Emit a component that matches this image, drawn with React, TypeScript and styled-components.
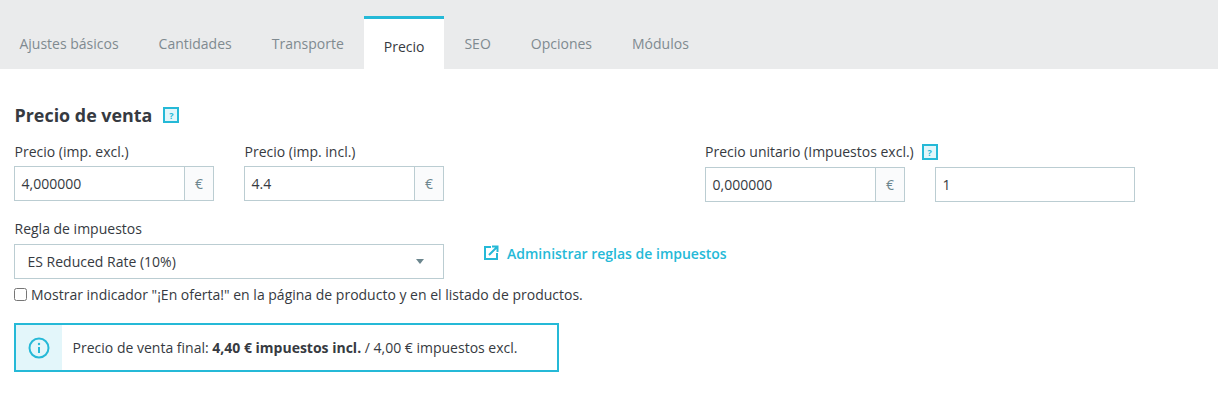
import React from "react";
import styled, { createGlobalStyle } from "styled-components";

const Global = createGlobalStyle`
  html, body { margin: 0; padding: 0; background: #fff; }
  body { font-family: "Open Sans", "Liberation Sans", sans-serif; font-size: 14px; color: #363a41; }
  * { box-sizing: border-box; }
`;

const Page = styled.div`
  width: 1218px;
  height: 407px;
  overflow: hidden;
`;

const TabBar = styled.nav`
  height: 69px;
  background: #eaebec;
  display: flex;
  align-items: flex-end;
`;

const Tab = styled.div<{ $active?: boolean }>`
  height: 53px;
  padding: ${(p) => (p.$active ? "18px 20px 0" : "15px 20px 0")};
  line-height: 20px;
  font-size: 14px;
  white-space: nowrap;
  color: ${(p) => (p.$active ? "#363a41" : "#7f8a90")};
  background: ${(p) => (p.$active ? "#fff" : "transparent")};
  border-top: 3px solid ${(p) => (p.$active ? "#25b9d7" : "transparent")};
  &:first-child { margin-left: -0.6px; }
`;

const Content = styled.main`
  padding: 36px 0 0 14px;
`;

const HeadingRow = styled.div`
  display: flex;
  align-items: center;
  gap: 11px;
  height: 20px;
  padding-left: 0.5px;
`;

const Heading = styled.h2`
  margin: 0;
  font-size: 17.9px;
  line-height: 20px;
  font-weight: 700;
  color: #363a41;
`;

const Help = styled.span`
  display: inline-flex;
  flex: none;
  width: 16px;
  height: 16px;
  align-items: center;
  justify-content: center;
  border: 2px solid #25b9d7;
  background: #e3f6fa;
  color: #25b9d7;
  font-size: 9px;
  font-weight: 700;
  line-height: 1;
`;

const PriceRow = styled.div`
  display: flex;
  align-items: flex-start;
  margin-top: 17px;
`;

const Field = styled.div<{ $gap?: number; $width?: number }>`
  margin-left: ${(p) => p.$gap ?? 0}px;
  width: ${(p) => (p.$width ? `${p.$width}px` : "auto")};
`;

const Label = styled.div`
  display: flex;
  align-items: center;
  gap: 8px;
  height: 20px;
  padding-left: 0.5px;
  font-size: 14px;
  line-height: 20px;
  color: #363a41;
  margin-bottom: 4px;
  white-space: nowrap;
`;

const OffsetLabel = styled(Label)`
  margin-bottom: 5px;
  padding-left: 0;
`;

const TaxLabel = styled(Label)`
  margin-bottom: 5px;
`;

const InputGroup = styled.div<{ $width: number }>`
  display: flex;
  width: ${(p) => p.$width}px;
  height: 35px;
  border: 1px solid #bbcdd2;
  background: #fff;
`;

const Value = styled.div`
  flex: 1;
  padding-left: 6.6px;
  height: 33px;
  font-size: 14px;
  color: #363a41;
  line-height: 33px;
`;

const Suffix = styled.div`
  width: 29px;
  border-left: 1px solid #bbcdd2;
  background: #fafbfc;
  color: #6c868e;
  text-align: center;
  line-height: 33px;
  font-size: 14px;
`;

const TaxRow = styled.div`
  display: flex;
  margin-top: 17px;
`;

const SelectBox = styled.div`
  display: flex;
  align-items: center;
  justify-content: space-between;
  width: 430px;
  height: 35px;
  padding: 0 19px 1px 12.5px;
  border: 1px solid #bbcdd2;
  font-size: 14px;
  color: #363a41;
`;

const Caret = styled.span`
  width: 0;
  height: 0;
  border-left: 4.5px solid transparent;
  border-right: 4.5px solid transparent;
  border-top: 5px solid #6c868e;
`;

const ManageLink = styled.a`
  display: flex;
  align-items: center;
  gap: 8px;
  margin: 24px 0 0 39px;
  height: 20px;
  font-size: 14px;
  font-weight: 600;
  color: #25b9d7;
  text-decoration: none;
  white-space: nowrap;
`;

const CheckRow = styled.label`
  display: flex;
  align-items: center;
  height: 20px;
  margin-top: 5px;
  font-size: 14px;
  color: #363a41;
  white-space: nowrap;
`;

const Box = styled.input`
  width: 13px;
  height: 13px;
  margin: 0 4px 0 0;
  flex: none;
`;

const Alert = styled.div`
  display: flex;
  width: 545px;
  height: 49px;
  margin-top: 19px;
  border: 2px solid #25b9d7;
  background: #fff;
`;

const AlertIcon = styled.div`
  width: 46px;
  background: #e3f6fa;
  display: flex;
  align-items: center;
  justify-content: center;
  color: #25b9d7;
`;

const AlertText = styled.div`
  padding-left: 10.6px;
  line-height: 45px;
  font-size: 14px;
  color: #363a41;
  white-space: nowrap;
  b { font-weight: 700; }
`;

const tabs = ["Ajustes básicos", "Cantidades", "Transporte", "Precio", "SEO", "Opciones", "Módulos"];

export default function App() {
  return (
    <Page>
      <Global />
      <TabBar>
        {tabs.map((t) => (
          <Tab key={t} $active={t === "Precio"}>{t}</Tab>
        ))}
      </TabBar>
      <Content>
        <HeadingRow>
          <Heading>Precio de venta</Heading>
          <Help>?</Help>
        </HeadingRow>
        <PriceRow>
          <Field>
            <Label>Precio (imp. excl.)</Label>
            <InputGroup $width={200}>
              <Value>4,000000</Value>
              <Suffix>€</Suffix>
            </InputGroup>
          </Field>
          <Field $gap={30}>
            <Label>Precio (imp. incl.)</Label>
            <InputGroup $width={200}>
              <Value>4.4</Value>
              <Suffix>€</Suffix>
            </InputGroup>
          </Field>
          <Field $gap={261} $width={200}>
            <OffsetLabel>
              Precio unitario (Impuestos excl.)
              <Help>?</Help>
            </OffsetLabel>
            <InputGroup $width={200}>
              <Value>0,000000</Value>
              <Suffix>€</Suffix>
            </InputGroup>
          </Field>
          <Field $gap={30} $width={200}>
            <OffsetLabel>&nbsp;</OffsetLabel>
            <InputGroup $width={200}>
              <Value>1</Value>
            </InputGroup>
          </Field>
        </PriceRow>
        <TaxRow>
          <Field>
            <TaxLabel>Regla de impuestos</TaxLabel>
            <SelectBox>
              ES Reduced Rate (10%)
              <Caret />
            </SelectBox>
          </Field>
          <ManageLink>
            <svg width="16" height="16" viewBox="0 0 16 16" fill="none" stroke="currentColor" strokeWidth="2">
              <path d="M8 2H2v12h12V8" />
              <path d="M6 10l8-8M9 1.5h5.5V7" />
            </svg>
            Administrar reglas de impuestos
          </ManageLink>
        </TaxRow>
        <CheckRow>
          <Box type="checkbox" />
          Mostrar indicador "¡En oferta!" en la página de producto y en el listado de productos.
        </CheckRow>
        <Alert>
          <AlertIcon>
            <svg width="22" height="22" viewBox="0 0 22 22" fill="none" stroke="currentColor">
              <circle cx="11" cy="11" r="9.5" strokeWidth="2" />
              <path d="M11 10v6" strokeWidth="2" />
              <circle cx="11" cy="7" r="1.2" fill="currentColor" stroke="none" />
            </svg>
          </AlertIcon>
          <AlertText>
            Precio de venta final: <b>4,40 € impuestos incl.</b> / 4,00 € impuestos excl.
          </AlertText>
        </Alert>
      </Content>
    </Page>
  );
}
